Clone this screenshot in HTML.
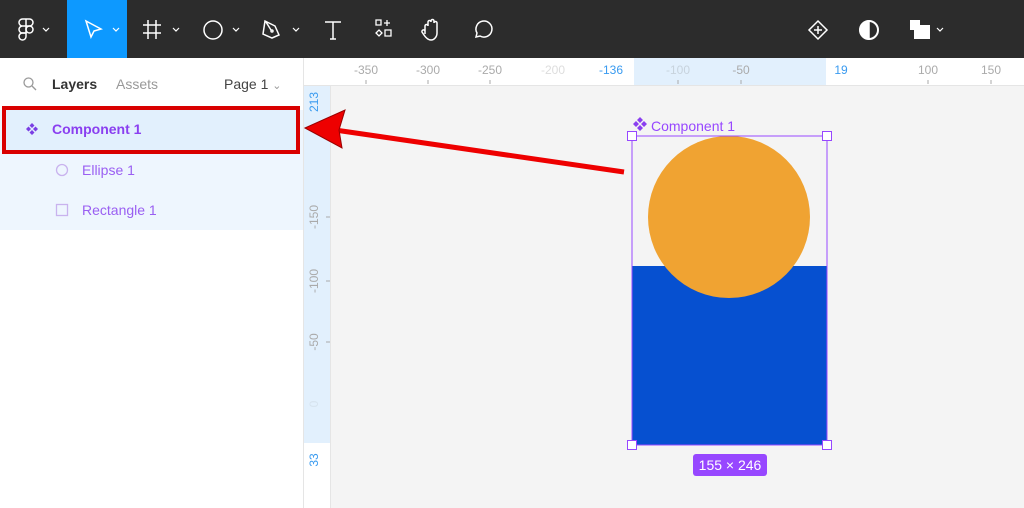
<!DOCTYPE html>
<html><head><style>
body{margin:0;width:1024px;height:508px;overflow:hidden;background:#f4f4f4;font-family:"Liberation Sans",sans-serif;position:relative}
.a{position:absolute}
.tb{left:0;top:0;width:1024px;height:58px;background:#2c2c2c}
.lp{left:0;top:58px;width:303px;height:450px;background:#fff;border-right:1px solid #e5e5e5}
</style></head><body>
<div class="a tb"></div>
<div class="a" style="left:67px;top:0;width:60px;height:58px;background:#0d99ff"></div>
<svg class="a" style="left:0;top:0" width="1024" height="58" fill="none" stroke="#fff" stroke-width="1.5">
<g transform="translate(19,19)"><path d="M0 3.5a3.5 3.5 0 0 1 3.5-3.5h3.5v7h-3.5a3.5 3.5 0 0 1-3.5-3.5zM7 0h3.5a3.5 3.5 0 0 1 0 7h-3.5zM0 10.5a3.5 3.5 0 0 1 3.5-3.5h3.5v7h-3.5a3.5 3.5 0 0 1-3.5-3.5z"/><circle cx="10.5" cy="10.5" r="3.5"/><path d="M7 14v3.5a3.5 3.5 0 0 1-7 0a3.5 3.5 0 0 1 3.5-3.5z"/></g>
<path d="M43 28l3 3 3-3M113 28l3 3 3-3M173 28l3 3 3-3M233 28l3 3 3-3M293 28l3 3 3-3M937 28l3 3 3-3" stroke-width="1.2"/>
<path d="M86 21l15 8-7 2-3 6z"/>
<path d="M148 20v19M156 20v19M143 25h18M143 33h18"/>
<circle cx="213" cy="30" r="9"/>
<path d="M265 21l10 5 4 9-7 3-9-4zM266 22l5 8"/><circle cx="272" cy="31" r="1"/>
<path d="M325 22h16M333 22v17M330 39h6"/>
<path d="M376 20h5v5h-5zM387 20v6M384 23h6M379 30l3 3-3 3-3-3zM385 30h6v6h-6z" stroke-width="1.3"/>
<path d="M425 34v-8a1.5 1.5 0 0 1 3 0v-4a1.5 1.5 0 0 1 3 0v-1a1.5 1.5 0 0 1 3 0v2a1.5 1.5 0 0 1 3 0v10c0 4-3 7-6 7-3 0-5-2-7-5l-2-3a1.5 1.5 0 0 1 3-1z"/>
<path d="M476 37l1-4a8 8 0 1 1 3 3z"/>
<path d="M818 21l9 9-9 9-9-9zM818 26v8M814 30h8"/>
<circle cx="869" cy="30" r="9" stroke-width="2"/><path d="M869 21a9 9 0 0 0 0 18z" fill="#fff"/>
<rect x="910" y="20" width="10" height="10" fill="#fff" stroke="none"/><rect x="914" y="25" width="16" height="14" fill="#fff" stroke="none"/>
</svg>
<div class="a lp"></div>
<svg class="a" style="left:23px;top:77px" width="14" height="14" fill="none" stroke="#999" stroke-width="1.3"><circle cx="5.5" cy="5.5" r="4.5"/><path d="M9 9l4 4"/></svg>
<div class="a" style="left:52px;top:76px;font-size:14px;font-weight:bold;color:#333">Layers</div>
<div class="a" style="left:116px;top:76px;font-size:14px;color:#999">Assets</div>
<div class="a" style="left:224px;top:76px;font-size:14px;color:#444">Page 1 <span style="color:#999;font-size:11px">⌄</span></div>
<div class="a" style="left:0;top:110px;width:303px;height:120px;background:#eef6fe"></div>
<div class="a" style="left:6px;top:110px;width:290px;height:40px;background:#e2f0fd;outline:4px solid #d90000;outline-offset:0"></div>
<svg class="a" style="left:25px;top:122px" width="14" height="14" fill="#7b3fe4"><path d="M7 1l2.5 2.5L7 6 4.5 3.5zM7 8l2.5 2.5L7 13l-2.5-2.5zM3.5 4.5L6 7 3.5 9.5 1 7zM10.5 4.5L13 7l-2.5 2.5L8 7z"/></svg>
<div class="a" style="left:52px;top:121px;font-size:14px;font-weight:bold;color:#8a3ff0">Component 1</div>
<svg class="a" style="left:55px;top:163px" width="14" height="54" fill="none" stroke="#c9b3ee" stroke-width="1.3"><circle cx="7" cy="7" r="5.5"/><rect x="1.5" y="41.5" width="11" height="11"/></svg>
<div class="a" style="left:82px;top:162px;font-size:14px;color:#9a5ff2">Ellipse 1</div>
<div class="a" style="left:82px;top:202px;font-size:14px;color:#9a5ff2">Rectangle 1</div>
<div class="a" style="left:304px;top:58px;width:720px;height:27px;background:#fff;border-bottom:1px solid #e5e5e5"></div>
<div class="a" style="left:634px;top:58px;width:192px;height:27px;background:#e2f0fd"></div>
<div class="a" style="left:304px;top:86px;width:26px;height:422px;background:#fff;border-right:1px solid #e5e5e5"></div>
<div class="a" style="left:304px;top:86px;width:26px;height:357px;background:#e2f0fd"></div>
<svg class="a" style="left:0;top:0" width="1024" height="508" font-family="Liberation Sans" font-size="12">
<g fill="#aaa" text-anchor="middle"><text x="366" y="74">-350</text><text x="428" y="74">-300</text><text x="490" y="74">-250</text><text x="553" y="74" fill="#ddd">-200</text><text x="678" y="74" fill="#c8d3dd">-100</text><text x="741" y="74">-50</text><text x="928" y="74">100</text><text x="991" y="74">150</text></g>
<text x="611" y="74" fill="#3a9bf0" text-anchor="middle">-136</text><text x="841" y="74" fill="#3a9bf0" text-anchor="middle">19</text>
<g stroke="#aaa"><path d="M366 80v4M428 80v4M490 80v4M678 80v4M741 80v4M928 80v4M991 80v4M326 217h4M326 281h4M326 342h4"/></g>
<g fill="#aaa" text-anchor="middle"><text transform="translate(318,217) rotate(-90)">-150</text><text transform="translate(318,281) rotate(-90)">-100</text><text transform="translate(318,342) rotate(-90)">-50</text><text transform="translate(318,404) rotate(-90)" fill="#d6e3ee">0</text></g>
<text transform="translate(318,102) rotate(-90)" fill="#3a9bf0" text-anchor="middle">213</text>
<text transform="translate(318,460) rotate(-90)" fill="#3a9bf0" text-anchor="middle">33</text>
<rect x="632" y="266" width="195" height="179" fill="#0650d0"/>
<circle cx="729" cy="217" r="81" fill="#f0a332"/>
<rect x="632" y="136" width="195" height="309" fill="none" stroke="#9747ff" stroke-width="1"/>
<g fill="#fff" stroke="#9747ff"><rect x="627.5" y="131.5" width="9" height="9"/><rect x="822.5" y="131.5" width="9" height="9"/><rect x="627.5" y="440.5" width="9" height="9"/><rect x="822.5" y="440.5" width="9" height="9"/></g>
<path fill="#8a3ff0" d="M640 119l3 3-3 3-3-3zM640 127l3 3-3 3-3-3zM636 123l3 3-3 3-3-3zM644 123l3 3-3 3-3-3z" transform="translate(0,-2)"/>
<text x="651" y="131" fill="#9747ff" font-size="14">Component 1</text>
<rect x="693" y="454" width="74" height="22" rx="3" fill="#9747ff"/>
<text x="730" y="470" fill="#fff" font-size="14" text-anchor="middle">155 × 246</text>
<path d="M624 172L335 130" stroke="#e00" stroke-width="5"/>
<path d="M305 128l40-18-6 20 3 18z" fill="#e00" stroke="#900" stroke-width="1"/>
</svg>
</body></html>
